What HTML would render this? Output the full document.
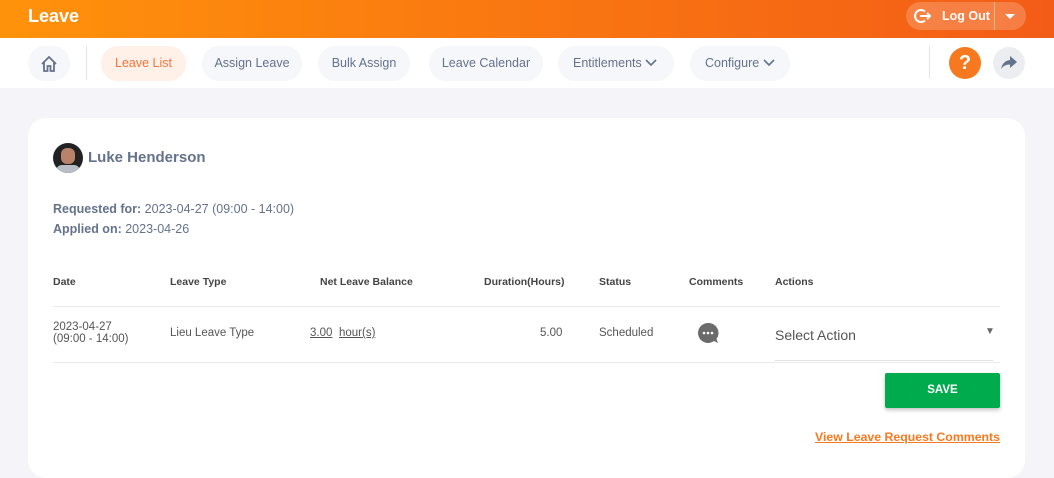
<!DOCTYPE html>
<html><head><style>
*{box-sizing:border-box;margin:0;padding:0}
body{width:1054px;height:462px;overflow:hidden;background:#f4f4f9;font-family:"Liberation Sans",sans-serif;position:relative}
.top{position:absolute;left:0;top:0;width:1054px;height:38px;background:linear-gradient(90deg,#ff920b,#f35c17)}
.top h1{position:absolute;left:28px;top:6px;color:#fff;font-size:18px;font-weight:bold}
.lo{position:absolute;left:906px;top:2px;width:120px;height:28px;border-radius:14px;background:rgba(255,255,255,.2);color:#fff;font-size:12.5px;font-weight:bold}
.nav{position:absolute;left:0;top:38px;width:1054px;height:50px;background:#fff}
.p{position:absolute;top:8px;height:35px;border-radius:17px;background:#f6f7fa;color:#64728c;font-size:12.5px;line-height:35px;text-align:center}
.card{position:absolute;left:28px;top:118px;width:997px;height:360px;background:#fff;border-radius:18px}
.t{position:absolute;font-size:11.5px;color:#555}
.h{font-weight:bold;font-size:10.5px;color:#444}
</style></head><body>
<div class="top"><h1>Leave</h1>
<div class="lo">
<svg style="position:absolute;left:8px;top:6px" width="18" height="16" viewBox="0 0 18 16"><path d="M11 3.5A6 6 0 1 0 11 12.5" fill="none" stroke="#fff" stroke-width="2"/><path d="M6 8h10M13 5l3 3-3 3" fill="none" stroke="#fff" stroke-width="2"/></svg>
<span style="position:absolute;left:36px;top:7px">Log Out</span>
<div style="position:absolute;left:88px;top:0;width:1px;height:28px;background:rgba(255,255,255,.4)"></div>
<div style="position:absolute;left:99px;top:12px;border:5px solid transparent;border-top:5px solid #fff;border-bottom:0"></div>
</div></div>
<div class="nav">
<div class="p" style="left:28px;width:42px"><svg style="margin-top:8px" width="20" height="20" viewBox="0 0 20 20"><path d="M3 10L10 3l7 7M5 8v9h3.5v-5h3v5H15V8" fill="none" stroke="#64728c" stroke-width="1.8"/></svg></div>
<div style="position:absolute;left:86px;top:8px;width:1px;height:34px;background:#e3e3e3"></div>
<div class="p" style="left:101px;width:85px;background:#fff1e7;color:#f7733d">Leave List</div>
<div class="p" style="left:202px;width:100px">Assign Leave</div>
<div class="p" style="left:318px;width:92px">Bulk Assign</div>
<div class="p" style="left:429px;width:114px">Leave Calendar</div>
<div class="p" style="left:558px;width:116px;text-align:left;padding-left:15px">Entitlements <svg width="12" height="8" viewBox="0 0 12 8"><path d="M1 1l5 5 5-5" fill="none" stroke="#64728c" stroke-width="1.6"/></svg></div>
<div class="p" style="left:690px;width:100px;text-align:left;padding-left:15px">Configure <svg width="12" height="8" viewBox="0 0 12 8"><path d="M1 1l5 5 5-5" fill="none" stroke="#64728c" stroke-width="1.6"/></svg></div>
<div style="position:absolute;left:929px;top:8px;width:1px;height:32px;background:#e3e3e3"></div>
<div style="position:absolute;left:949px;top:9px;width:32px;height:32px;border-radius:50%;background:#f7791f;color:#fff;font-weight:bold;font-size:20px;text-align:center;line-height:32px">?</div>
<div style="position:absolute;left:993px;top:9px;width:32px;height:32px;border-radius:50%;background:#ebedf0"><svg style="position:absolute;left:8px;top:9px" width="16" height="14" viewBox="0 0 16 14"><path d="M9 0l7 6-7 6V8.5C5 8.5 2 10 0 13 1 8 4 4.5 9 4z" fill="#64728c"/></svg></div>
</div>
<div class="card">
<div style="position:absolute;left:25px;top:25px;width:30px;height:30px;border-radius:50%;background:#222;overflow:hidden"><div style="position:absolute;left:8px;top:5px;width:14px;height:16px;border-radius:6px;background:#b7836a"></div><div style="position:absolute;left:3px;top:22px;width:24px;height:12px;border-radius:8px;background:#b8bdc6"></div></div>
<div style="position:absolute;left:60px;top:31px;font-size:15px;font-weight:bold;color:#64728c">Luke Henderson</div>
<div class="t" style="left:25px;top:84px;font-size:12.5px;color:#64728c"><b>Requested for:</b> 2023-04-27 (09:00 - 14:00)</div>
<div class="t" style="left:25px;top:104px;font-size:12.5px;color:#64728c"><b>Applied on:</b> 2023-04-26</div>
<div class="t h" style="left:25px;top:158px">Date</div>
<div class="t h" style="left:142px;top:158px">Leave Type</div>
<div class="t h" style="left:292px;top:158px">Net Leave Balance</div>
<div class="t h" style="left:456px;top:158px">Duration(Hours)</div>
<div class="t h" style="left:571px;top:158px">Status</div>
<div class="t h" style="left:661px;top:158px">Comments</div>
<div class="t h" style="left:747px;top:158px">Actions</div>
<div style="position:absolute;left:25px;top:188px;width:947px;height:1px;background:#ebebeb"></div>
<div class="t" style="left:25px;top:203px;line-height:12px">2023-04-27<br>(09:00 - 14:00)</div>
<div class="t" style="left:142px;top:209px">Lieu Leave Type</div>
<div class="t" style="left:282px;top:209px;text-decoration:underline">3.00</div>
<div class="t" style="left:311px;top:209px;text-decoration:underline">hour(s)</div>
<div class="t" style="left:512px;top:209px">5.00</div>
<div class="t" style="left:571px;top:209px">Scheduled</div>
<svg style="position:absolute;left:670px;top:205px" width="21" height="21" viewBox="0 0 21 21"><path d="M10 0a10 10 0 1 0 6 18l4 2-1.5-4A10 10 0 0 0 10 0z" fill="#6b6b6b"/><circle cx="6" cy="10" r="1.3" fill="#fff"/><circle cx="10" cy="10" r="1.3" fill="#fff"/><circle cx="14" cy="10" r="1.3" fill="#fff"/></svg>
<div class="t" style="left:747px;top:209px;font-size:14px;color:#555">Select Action</div>
<div class="t" style="left:957px;top:208px;font-size:10px;color:#666">▼</div>
<div style="position:absolute;left:747px;top:242px;width:218px;height:1px;background:#e3e3e3"></div>
<div style="position:absolute;left:25px;top:244px;width:947px;height:1px;background:#ebebeb"></div>
<div style="position:absolute;left:857px;top:255px;width:115px;height:35px;background:#00ab4e;border-radius:2px;box-shadow:0 2px 4px rgba(0,0,0,.25);color:#fff;font-weight:bold;font-size:11.5px;text-align:center;line-height:35px">SAVE</div>
<div class="t" style="left:787px;top:312px;color:#f7791f;font-weight:bold;font-size:12.3px;text-decoration:underline">View Leave Request Comments</div>
</div>
</body></html>
